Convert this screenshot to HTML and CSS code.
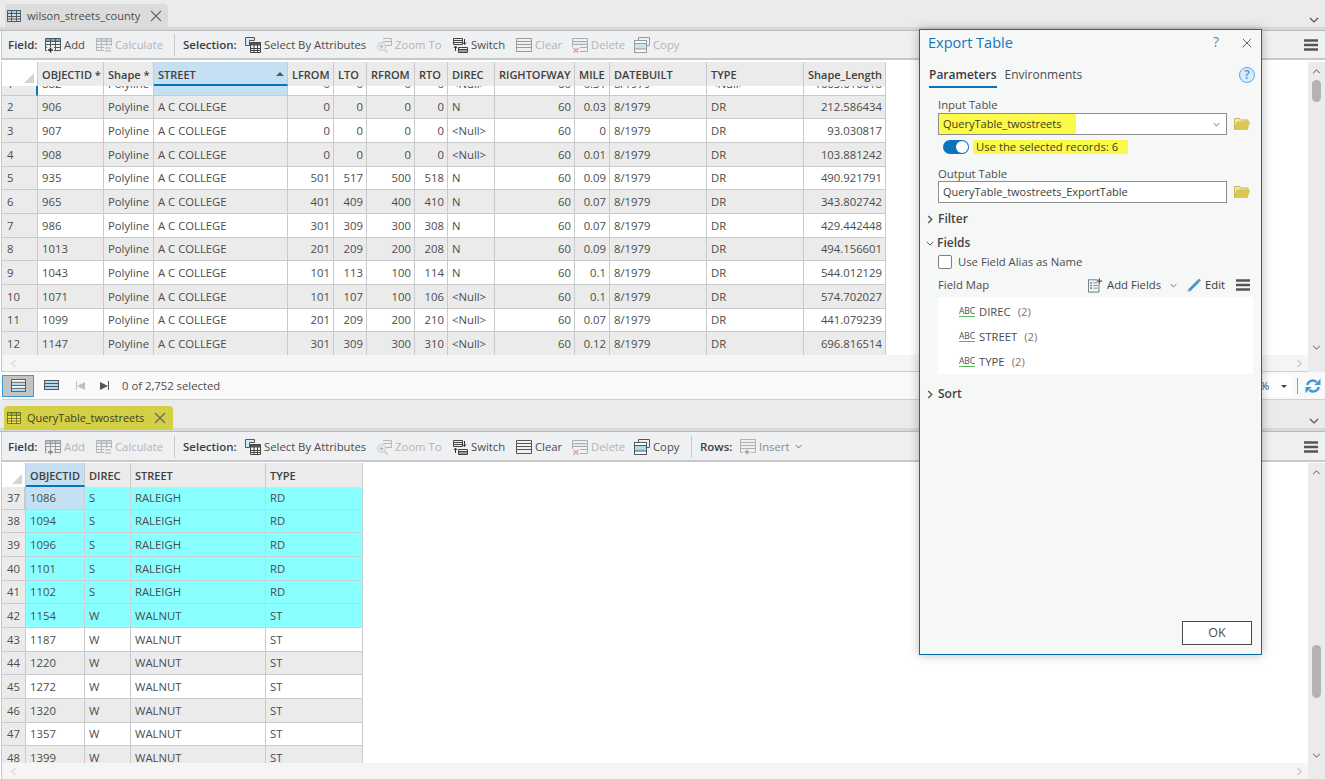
FILE: index.html
```html
<!DOCTYPE html>
<html lang="en">
<head>
<meta charset="utf-8">
<title>Export Table</title>
<link rel="stylesheet" href="styles.css">
</head>
<body>
<svg class="defs" width="0" height="0" aria-hidden="true">
  <symbol id="tbl" viewBox="0 0 16 16"><rect x="1" y="2" width="14" height="3" fill="#a9d3ee"/><path d="M1.500 2.500h13v11h-13zM1 5.500h14M1 8.500h14M1 11h14M5.500 2v12M10.500 2v12" fill="none" stroke="#4d5b66"/></symbol>
  <symbol id="add" viewBox="0 0 16 16"><rect x="1" y="1" width="14" height="3" fill="#6ea9d6"/><path d="M.5 1.500h15v12H.5zM0 4.500h16M0 7.500h16M0 10.500h16M5.500 1v13M10.500 1v13" fill="none" stroke="#555"/><rect x="2" y="10" width="7" height="6" fill="#f0f1f3"/><path d="M5.500 10.500v5M3 13h5" stroke="#333" stroke-width="1.600"/></symbol>
  <symbol id="calc" viewBox="0 0 16 16"><rect x="1" y="1" width="14" height="3" fill="#a9c9e2"/><path d="M.5 1.500h15v12H.5zM0 4.500h16M0 7.500h16M0 10.500h16M5.500 1v13M10.500 1v13" fill="none" stroke="#888"/><rect x="8" y="9" width="8" height="7" fill="#f0f1f3"/><path d="M9 11h6M9 14h6" stroke="#777" stroke-width="1.200"/></symbol>
  <symbol id="sel" viewBox="0 0 16 16"><path d="M.5.500h9v3h-5v5h-4z" fill="#d4e9f7" stroke="#555"/><rect x="5" y="5" width="11" height="11" fill="#f0f1f3"/><rect x="5.500" y="5.500" width="10" height="3" fill="#555"/><path d="M5.500 5.500h10v10h-10zM5 11.500h11M5 13.500h11M9 8v8M12.500 8v8" fill="none" stroke="#444"/></symbol>
  <symbol id="zoom" viewBox="0 0 16 16"><path d="M7 1.500h8.500v7h-6M7 4.500h8.500" fill="none" stroke="#888"/><circle cx="5.500" cy="9.500" r="4" fill="#dbeaf5" stroke="#9cb6c9"/><path d="M8.500 12.500l3 3" stroke="#c5a882" stroke-width="1.600"/><path d="M3.500 9.500h4M5.500 7.500v4" stroke="#888"/></symbol>
  <symbol id="swi" viewBox="0 0 16 16"><path d="M1.500 1.500h9v6h-9zM1 3.500h10M1 5.500h10M6.500 10.500h9v5h-9zM6 12.500h10M6 14h10" fill="none" stroke="#444"/><path d="M12.500 2v5M11 5.500l1.500 2 1.500-2M3.500 14v-4.500M2 11l1.500-2 1.500 2" fill="none" stroke="#333"/></symbol>
  <symbol id="clr" viewBox="0 0 16 16"><path d="M.5 1.500h15v13H.5zM0 4.500h16M0 7.500h16M0 10.500h16" fill="none" stroke="#555"/></symbol>
  <symbol id="del" viewBox="0 0 16 16"><rect x="0" y="4.500" width="16" height="3" fill="#cfe3f2"/><path d="M.5 1.500h15v13H.5zM0 4.500h16M0 7.500h16M6 10.500h10" fill="none" stroke="#777"/><rect x="0" y="10" width="8" height="6" fill="#f0f1f3"/><path d="M1.500 11l5 4.500M6.500 11l-5 4.500" stroke="#d9603d" stroke-width="1.500"/></symbol>
  <symbol id="cpy" viewBox="0 0 16 16"><path d="M4.500 3V.5h11v8H13" fill="none" stroke="#555"/><rect x=".5" y="3.500" width="12" height="12" fill="#fff" stroke="#555"/><rect x="1" y="7" width="11" height="5" fill="#a9dcf4"/><path d="M0 6.500h13M0 12h13" stroke="#555"/></symbol>
  <symbol id="ins" viewBox="0 0 16 16"><path d="M.5.500h15v13H.5zM0 3.500h16M0 6.500h16M0 9.500h16" fill="none" stroke="#888"/><rect x="3" y="10" width="8" height="6" fill="#f0f1f3"/><path d="M7 10.500v5M4.500 13h5" stroke="#777" stroke-width="1.600"/></symbol>
  <symbol id="ham" viewBox="0 0 14 12"><path d="M0 1.500h14M0 6h14M0 10.500h14" stroke="#555" stroke-width="2.600"/></symbol>
  <symbol id="folder" viewBox="0 0 16 14"><path d="M.5 3V1.500h5l1 1.500h7.500V5H3L.5 12z" fill="#f3e9b5" stroke="#c8b454"/><path d="M3 5h13l-2.500 8H0z" fill="#d9c654"/></symbol>
  <symbol id="dn" viewBox="0 0 10 6"><path d="M1 1l4 4 4-4" fill="none" stroke="#555" stroke-width="1.200"/></symbol>
  <symbol id="up" viewBox="0 0 10 6"><path d="M1 5l4-4 4 4" fill="none" stroke="#555" stroke-width="1.200"/></symbol>
  <symbol id="rt" viewBox="0 0 6 10"><path d="M1 1l4 4-4 4" fill="none" stroke="#555" stroke-width="1.500"/></symbol>
  <symbol id="lt" viewBox="0 0 6 10"><path d="M5 1L1 5l4 4" fill="none" stroke="#555" stroke-width="1.200"/></symbol>
  <symbol id="x" viewBox="0 0 12 12"><path d="M1 1l10 10M11 1L1 11" stroke="#666" stroke-width="1.200"/></symbol>
  <symbol id="view1" viewBox="0 0 16 14"><rect x=".5" y=".5" width="15" height="13" fill="#fff" stroke="#555"/><rect x="1" y="4" width="14" height="3" fill="#a9dcf4"/><rect x="1" y="10" width="14" height="3" fill="#a9dcf4"/><path d="M0 3.500h16M0 7h16M0 10h16" stroke="#555"/></symbol>
  <symbol id="view2" viewBox="0 0 15 10"><rect x=".5" y=".5" width="14" height="9" fill="#a9dcf4" stroke="#555"/><path d="M0 3.500h15M0 6.500h15" stroke="#555"/></symbol>
</svg>

<section class="pane pane-top">
  <div class="tabstrip tabstrip-top">
    <div class="tab tab-plain">
      <svg class="ic16"><use href="#tbl"/></svg>
      <span class="tab-label">wilson_streets_county</span>
      <svg class="tab-x"><use href="#x"/></svg>
    </div>
    <svg class="strip-chev"><use href="#dn"/></svg>
  </div>
  <div class="band"></div>
  <div class="toolbar">
    <span class="lbl w-field">Field:</span>
    <span class="tool w-add"><svg class="ic16"><use href="#add"/></svg>Add</span>
    <span class="tool off w-calc"><svg class="ic16"><use href="#calc"/></svg>Calculate</span>
    <i class="tsep"></i>
    <span class="lbl w-sel">Selection:</span>
    <span class="tool w-sba"><svg class="ic16"><use href="#sel"/></svg>Select By Attributes</span>
    <span class="tool off w-zoom"><svg class="ic16"><use href="#zoom"/></svg>Zoom To</span>
    <span class="tool w-swi"><svg class="ic16"><use href="#swi"/></svg>Switch</span>
    <span class="tool off w-clr"><svg class="ic16"><use href="#clr"/></svg>Clear</span>
    <span class="tool off w-del"><svg class="ic16"><use href="#del"/></svg>Delete</span>
    <span class="tool off w-cpy"><svg class="ic16"><use href="#cpy"/></svg>Copy</span>
    <svg class="ham"><use href="#ham"/></svg>
  </div>
  <div class="work work-top">
    <div class="work-left">
      <div class="grid grid-a">
        <div class="row head">
          <div class="c corner"></div><div class="c">OBJECTID *</div><div class="c">Shape *</div><div class="c sorted">STREET<i class="sort"></i></div><div class="c">LFROM</div><div class="c">LTO</div><div class="c">RFROM</div><div class="c">RTO</div><div class="c">DIREC</div><div class="c">RIGHTOFWAY</div><div class="c">MILE</div><div class="c">DATEBUILT</div><div class="c">TYPE</div><div class="c">Shape_Length</div>
        </div>
        <div class="body">
          <div class="rows rows-a">
            <div class="row"><div class="c n cur">1</div><div class="c">882</div><div class="c">Polyline</div><div class="c hl"></div><div class="c r">0</div><div class="c r">0</div><div class="c r">0</div><div class="c r">0</div><div class="c">&lt;Null&gt;</div><div class="c r">60</div><div class="c r">0.31</div><div class="c">8/1979</div><div class="c">&lt;Null&gt;</div><div class="c r">1663.616618</div></div>
            <div class="row alt"><div class="c n">2</div><div class="c">906</div><div class="c">Polyline</div><div class="c">A C COLLEGE</div><div class="c r">0</div><div class="c r">0</div><div class="c r">0</div><div class="c r">0</div><div class="c">N</div><div class="c r">60</div><div class="c r">0.03</div><div class="c">8/1979</div><div class="c">DR</div><div class="c r">212.586434</div></div>
            <div class="row"><div class="c n">3</div><div class="c">907</div><div class="c">Polyline</div><div class="c">A C COLLEGE</div><div class="c r">0</div><div class="c r">0</div><div class="c r">0</div><div class="c r">0</div><div class="c">&lt;Null&gt;</div><div class="c r">60</div><div class="c r">0</div><div class="c">8/1979</div><div class="c">DR</div><div class="c r">93.030817</div></div>
            <div class="row alt"><div class="c n">4</div><div class="c">908</div><div class="c">Polyline</div><div class="c">A C COLLEGE</div><div class="c r">0</div><div class="c r">0</div><div class="c r">0</div><div class="c r">0</div><div class="c">&lt;Null&gt;</div><div class="c r">60</div><div class="c r">0.01</div><div class="c">8/1979</div><div class="c">DR</div><div class="c r">103.881242</div></div>
            <div class="row"><div class="c n">5</div><div class="c">935</div><div class="c">Polyline</div><div class="c">A C COLLEGE</div><div class="c r">501</div><div class="c r">517</div><div class="c r">500</div><div class="c r">518</div><div class="c">N</div><div class="c r">60</div><div class="c r">0.09</div><div class="c">8/1979</div><div class="c">DR</div><div class="c r">490.921791</div></div>
            <div class="row alt"><div class="c n">6</div><div class="c">965</div><div class="c">Polyline</div><div class="c">A C COLLEGE</div><div class="c r">401</div><div class="c r">409</div><div class="c r">400</div><div class="c r">410</div><div class="c">N</div><div class="c r">60</div><div class="c r">0.07</div><div class="c">8/1979</div><div class="c">DR</div><div class="c r">343.802742</div></div>
            <div class="row"><div class="c n">7</div><div class="c">986</div><div class="c">Polyline</div><div class="c">A C COLLEGE</div><div class="c r">301</div><div class="c r">309</div><div class="c r">300</div><div class="c r">308</div><div class="c">N</div><div class="c r">60</div><div class="c r">0.07</div><div class="c">8/1979</div><div class="c">DR</div><div class="c r">429.442448</div></div>
            <div class="row alt"><div class="c n">8</div><div class="c">1013</div><div class="c">Polyline</div><div class="c">A C COLLEGE</div><div class="c r">201</div><div class="c r">209</div><div class="c r">200</div><div class="c r">208</div><div class="c">N</div><div class="c r">60</div><div class="c r">0.09</div><div class="c">8/1979</div><div class="c">DR</div><div class="c r">494.156601</div></div>
            <div class="row"><div class="c n">9</div><div class="c">1043</div><div class="c">Polyline</div><div class="c">A C COLLEGE</div><div class="c r">101</div><div class="c r">113</div><div class="c r">100</div><div class="c r">114</div><div class="c">N</div><div class="c r">60</div><div class="c r">0.1</div><div class="c">8/1979</div><div class="c">DR</div><div class="c r">544.012129</div></div>
            <div class="row alt"><div class="c n">10</div><div class="c">1071</div><div class="c">Polyline</div><div class="c">A C COLLEGE</div><div class="c r">101</div><div class="c r">107</div><div class="c r">100</div><div class="c r">106</div><div class="c">&lt;Null&gt;</div><div class="c r">60</div><div class="c r">0.1</div><div class="c">8/1979</div><div class="c">DR</div><div class="c r">574.702027</div></div>
            <div class="row"><div class="c n">11</div><div class="c">1099</div><div class="c">Polyline</div><div class="c">A C COLLEGE</div><div class="c r">201</div><div class="c r">209</div><div class="c r">200</div><div class="c r">210</div><div class="c">&lt;Null&gt;</div><div class="c r">60</div><div class="c r">0.07</div><div class="c">8/1979</div><div class="c">DR</div><div class="c r">441.079239</div></div>
            <div class="row alt"><div class="c n">12</div><div class="c">1147</div><div class="c">Polyline</div><div class="c">A C COLLEGE</div><div class="c r">301</div><div class="c r">309</div><div class="c r">300</div><div class="c r">310</div><div class="c">&lt;Null&gt;</div><div class="c r">60</div><div class="c r">0.12</div><div class="c">8/1979</div><div class="c">DR</div><div class="c r">696.816514</div></div>
          </div>
        </div>
      </div>
      <div class="hscroll hscroll-top"><svg class="ar-h faint"><use href="#lt"/></svg><svg class="ar-h faint"><use href="#rt"/></svg></div>
    </div>
    <div class="vscroll vscroll-top"><svg class="ar-v"><use href="#up"/></svg><i class="thumb thumb-top"></i><svg class="ar-v ar-end"><use href="#dn"/></svg></div>
  </div>
  <div class="status">
    <span class="view view-on"><svg class="ic-view"><use href="#view1"/></svg></span>
    <svg class="ic-view2"><use href="#view2"/></svg>
    <span class="nav nav-off"><i class="nav-bar"></i><i class="tri-l"></i></span>
    <span class="nav"><i class="tri-r"></i><i class="nav-bar"></i></span>
    <span class="count">0 of 2,752 selected</span>
    <span class="pct">%<i class="pct-caret"></i></span>
    <i class="stat-sep"></i>
    <svg class="refresh" viewBox="0 0 16 16"><path d="M2.200 7A5.600 5.600 0 0 1 11.500 4M13.800 9A5.600 5.600 0 0 1 4.500 12" fill="none" stroke="#3d9ad9" stroke-width="2.400"/><path d="M15.500 .8v6.200H9.300zM.5 15.200V9h6.200z" fill="#3d9ad9"/></svg>
  </div>
</section>

<section class="pane pane-bottom">
  <div class="tabstrip tabstrip-bottom">
    <div class="tab tab-yellow">
      <svg class="ic16" viewBox="0 0 16 16"><rect x="1" y="2" width="14" height="12" fill="#f0e84e"/><rect x="1" y="2" width="14" height="3" fill="#a8b43e"/><path d="M1.500 2.500h13v11h-13zM1 5.500h14M1 8.500h14M1 11h14M5.500 2v12M10.500 2v12" fill="none" stroke="#5d6322" stroke-width=".8"/></svg>
      <span class="tab-label">QueryTable_twostreets</span>
      <svg class="tab-x"><use href="#x"/></svg>
    </div>
    <svg class="strip-chev"><use href="#dn"/></svg>
  </div>
  <div class="band"></div>
  <div class="toolbar toolbar-tall">
    <span class="lbl w-field">Field:</span>
    <span class="tool off w-add"><svg class="ic16"><use href="#add"/></svg>Add</span>
    <span class="tool off w-calc"><svg class="ic16"><use href="#calc"/></svg>Calculate</span>
    <i class="tsep"></i>
    <span class="lbl w-sel">Selection:</span>
    <span class="tool w-sba"><svg class="ic16"><use href="#sel"/></svg>Select By Attributes</span>
    <span class="tool off w-zoom"><svg class="ic16"><use href="#zoom"/></svg>Zoom To</span>
    <span class="tool w-swi"><svg class="ic16"><use href="#swi"/></svg>Switch</span>
    <span class="tool w-clr"><svg class="ic16"><use href="#clr"/></svg>Clear</span>
    <span class="tool off w-del"><svg class="ic16"><use href="#del"/></svg>Delete</span>
    <span class="tool w-cpy"><svg class="ic16"><use href="#cpy"/></svg>Copy</span>
    <i class="tsep"></i>
    <span class="lbl w-rows">Rows:</span>
    <span class="tool off-soft"><svg class="ic16"><use href="#ins"/></svg>Insert<svg class="mini"><use href="#dn"/></svg></span>
    <svg class="ham"><use href="#ham"/></svg>
  </div>
  <div class="work work-bottom">
    <div class="work-left">
      <div class="grid grid-b">
        <div class="row head">
          <div class="c corner"></div><div class="c sorted-id">OBJECTID</div><div class="c">DIREC</div><div class="c">STREET</div><div class="c">TYPE</div>
        </div>
        <div class="body">
          <div class="rows rows-b">
            <div class="row sel"><div class="c n cur">37</div><div class="c hl">1086</div><div class="c">S</div><div class="c">RALEIGH</div><div class="c">RD</div></div>
            <div class="row sel"><div class="c n">38</div><div class="c">1094</div><div class="c">S</div><div class="c">RALEIGH</div><div class="c">RD</div></div>
            <div class="row sel"><div class="c n">39</div><div class="c">1096</div><div class="c">S</div><div class="c">RALEIGH</div><div class="c">RD</div></div>
            <div class="row sel"><div class="c n">40</div><div class="c">1101</div><div class="c">S</div><div class="c">RALEIGH</div><div class="c">RD</div></div>
            <div class="row sel"><div class="c n">41</div><div class="c">1102</div><div class="c">S</div><div class="c">RALEIGH</div><div class="c">RD</div></div>
            <div class="row sel"><div class="c n">42</div><div class="c">1154</div><div class="c">W</div><div class="c">WALNUT</div><div class="c">ST</div></div>
            <div class="row"><div class="c n">43</div><div class="c">1187</div><div class="c">W</div><div class="c">WALNUT</div><div class="c">ST</div></div>
            <div class="row alt"><div class="c n">44</div><div class="c">1220</div><div class="c">W</div><div class="c">WALNUT</div><div class="c">ST</div></div>
            <div class="row"><div class="c n">45</div><div class="c">1272</div><div class="c">W</div><div class="c">WALNUT</div><div class="c">ST</div></div>
            <div class="row alt"><div class="c n">46</div><div class="c">1320</div><div class="c">W</div><div class="c">WALNUT</div><div class="c">ST</div></div>
            <div class="row"><div class="c n">47</div><div class="c">1357</div><div class="c">W</div><div class="c">WALNUT</div><div class="c">ST</div></div>
            <div class="row alt"><div class="c n">48</div><div class="c">1399</div><div class="c">W</div><div class="c">WALNUT</div><div class="c">ST</div></div>
          </div>
        </div>
      </div>
      <div class="hscroll hscroll-bottom"><svg class="ar-h faint"><use href="#lt"/></svg><svg class="ar-h faint"><use href="#rt"/></svg></div>
    </div>
    <div class="vscroll vscroll-bottom"><svg class="ar-v"><use href="#up"/></svg><i class="thumb thumb-bottom"></i><svg class="ar-v ar-end"><use href="#dn"/></svg></div>
  </div>
</section>

<aside class="dialog">
  <header class="dlg-title">
    <span class="dlg-name">Export Table</span>
    <span class="dlg-q">?</span>
    <svg class="dlg-x"><use href="#x"/></svg>
  </header>
  <div class="dlg-tabs">
    <span class="dlg-tab dlg-tab-on">Parameters</span>
    <span class="dlg-tab">Environments</span>
    <span class="help">?</span>
  </div>
  <div class="form">
    <div class="f-label f-first">Input Table</div>
    <div class="f-row">
      <div class="f-box f-select"><span class="mark mark-input">QueryTable_twostreets</span><svg class="mini sel-caret"><use href="#dn"/></svg></div>
      <svg class="folder"><use href="#folder"/></svg>
    </div>
    <div class="toggle-row">
      <span class="toggle"><i class="knob"></i></span>
      <span class="mark mark-toggle">Use the selected records: 6</span>
    </div>
    <div class="f-label f-second">Output Table</div>
    <div class="f-row">
      <div class="f-box">QueryTable_twostreets_ExportTable</div>
      <svg class="folder"><use href="#folder"/></svg>
    </div>
  </div>
  <div class="sect sect-filter"><svg class="sect-rt"><use href="#rt"/></svg>Filter</div>
  <div class="sect sect-fields"><svg class="sect-dn"><use href="#dn"/></svg>Fields</div>
  <div class="check-row"><i class="check"></i>Use Field Alias as Name</div>
  <div class="map-bar">
    <span class="map-name">Field Map</span>
    <svg class="ic-addf" viewBox="0 0 16 16"><path d="M.5 1.500h10.500M.5 1.500v14h12V6" fill="none" stroke="#666"/><path d="M2.500 5h2M2.500 8h2M2.500 11h2" stroke="#3d9ad9" stroke-width="2"/><path d="M6 5h5M6 8h5M6 11h5" stroke="#777"/><path d="M13 0v6M10 3h6" stroke="#555" stroke-width="1.500"/></svg>
    <span class="map-add">Add Fields</span>
    <svg class="mini map-caret"><use href="#dn"/></svg>
    <svg class="ic-pen" viewBox="0 0 14 14"><path d="M1 11.500L10.500 2l2 2L3 13.500z" fill="#3d9ad9"/><path d="M1 11.500L3 13.500 0 14z" fill="#e3b98c"/><path d="M10.500 2l1.500-1.500 2 2L12.500 4z" fill="#888"/></svg>
    <span class="map-edit">Edit</span>
    <svg class="ham ham-map"><use href="#ham"/></svg>
  </div>
  <ul class="fields">
    <li class="field"><span class="abc">ABC</span>DIREC<span class="fcount">(2)</span></li>
    <li class="field"><span class="abc">ABC</span>STREET<span class="fcount">(2)</span></li>
    <li class="field"><span class="abc">ABC</span>TYPE<span class="fcount">(2)</span></li>
  </ul>
  <div class="sect sect-sort"><svg class="sect-rt"><use href="#rt"/></svg>Sort</div>
  <div class="dlg-foot"><span class="ok">OK</span></div>
</aside>
</body>
</html>
```
FILE: styles.css
```css
* { box-sizing: border-box; }
html, body { margin: 0; padding: 0; }
body {
  width: 1325px; height: 779px; overflow: hidden; position: relative;
  background: #fff; color: #4c4c4c;
  font-family: "Open Sans", "Noto Sans", "Liberation Sans", sans-serif;
  font-size: 11.3px; line-height: 16px;
}
.defs { position: absolute; }
i { display: block; font-style: normal; }
svg { display: block; flex: none; }
.pane { display: flex; flex-direction: column; }
.pane-top { height: 400px; }
.pane-bottom { height: 379px; }

/* tabs */
.tabstrip { background: #ebebeb; display: flex; align-items: flex-end; position: relative; }
.tabstrip-top { height: 27px; padding-left: 5px; }
.tabstrip-bottom { height: 28px; padding-left: 4px; }
.tab { display: flex; align-items: center; height: 23px; border-radius: 4px 4px 0 0; padding-left: 1px; }
.tab-plain { width: 163px; background: #dcdcdc; }
.tab-yellow { width: 169px; height: 24px; margin-bottom: -2px; background: #d3cf46; position: relative; padding-left: 2px; color: #3e3e20; }
.tab-label { margin-left: 5px; white-space: nowrap; font-size: 11.1px; flex: 1; }
.tab-yellow .tab-label { font-size: 10.9px; }
.tab-x { width: 12px; height: 12px; margin-right: 6px; }
.tab-yellow .tab-x { margin-right: 7px; }
.ic16 { width: 16px; height: 16px; }
.strip-chev { width: 10px; height: 6px; margin-left: auto; margin-right: 6px; margin-bottom: 4px; }
.band { height: 4px; background: #d8d8d8; border-bottom: 1px solid #bdbdbd; }

/* toolbar */
.toolbar {
  height: 29px; margin-left: 1px; padding: 1px 0 0 6px; background: #eff0f2;
  display: flex; align-items: center; border-bottom: 2px solid #c8c8c8; border-left: 1px solid #c8c8c8;
  white-space: nowrap;
}
.toolbar-tall { height: 30px; }
.lbl { font-weight: 600; color: #3d3d3d; font-size: 11.5px; }
.w-field { width: 37px; }
.w-sel { width: 62px; }
.w-rows { width: 40px; }
.tool { display: flex; align-items: center; gap: 3px; }
.w-add { width: 51px; }
.w-calc { width: 78px; }
.w-sba { width: 131px; }
.w-zoom { width: 76px; }
.w-swi { width: 64px; }
.w-clr { width: 56px; }
.w-del { width: 62px; }
.w-cpy { width: 57px; }
.off { color: #b4b4b4; }
.off svg { opacity: .55; }
.off-soft { color: #8a8a8a; }
.off-soft .ic16 { opacity: .6; }
.tsep { width: 1px; height: 22px; background: #c8c8c8; margin: 0 8px 0 0; }
.mini { width: 7px; height: 5px; margin-left: 3px; }
.ham { width: 14px; height: 12px; margin-left: auto; margin-right: 7px; }

/* work area */
.work { display: flex; padding-top: 2px; }
.work-top { height: 312px; }
.work-bottom { height: 317px; padding-top: 1px; }
.work-left { flex: 1; min-width: 0; display: flex; flex-direction: column; margin-left: 1px; border-left: 1px solid #c8c8c8; }
.vscroll { width: 17px; background: #ebebeb; position: relative; }
.grid { flex: 1; min-height: 0; display: flex; flex-direction: column; overflow: hidden; }
.grid-a { --cols: 36px 66px 50px 134px 46px 33px 48px 33px 47px 80px 35px 97px 97px 82px; }
.grid-b { --cols: 24px 59px 46px 135px 97px; }
.row { display: grid; grid-template-columns: var(--cols); justify-content: start; height: 23.67px; }
.head { height: 24px; flex: none; }
.body { flex: 1; min-height: 0; overflow: hidden; }
.rows-a { margin-top: -14px; }
.rows-b { margin-top: -1px; }
.c {
  padding: 1px 3px 0 4px; display: flex; align-items: center; min-width: 0;
  white-space: nowrap; overflow: hidden;
  border-right: 1px solid #cacaca; border-bottom: 1px solid #cacaca;
  position: relative;
}
.r { justify-content: flex-end; }
.alt .c { background: #ebebeb; }
.n { background: #ebebeb; padding-left: 5px; }
.sel .c { background: #8affff; border-color: #c9d3d3; }
.sel .n { background: #ebebeb; border-color: #cacaca; }
.sel .c.hl, .c.hl { background: #c5e0f3; }
.cur { border-right: 2px solid #0a74ba; }
.head .c { background: #ebebeb; font-weight: 600; font-size: 11px; color: #404040; border-bottom: none; padding-top: 2px; }
.head .corner { background: #fff; }
.corner::after {
  content: ""; position: absolute; right: 3px; bottom: 3px;
  border-style: solid; border-width: 0 0 10px 10px; border-color: transparent transparent #d4d4d4 transparent;
}
.head .sorted { background: #c5e0f3; border-bottom: 2px solid #0a74ba; justify-content: flex-start; padding-top: 4px; }
.head .sorted-id { background: #c5e0f3; border-bottom: 2px solid #0a74ba; padding-top: 4px; }
.sort {
  position: absolute; right: 3px; top: 10px;
  border-style: solid; border-width: 0 4px 4px 4px; border-color: transparent transparent #555 transparent;
}
.hscroll { background: #f5f5f5; display: flex; justify-content: space-between; align-items: center; flex: none; padding: 0 6px 0 9px; }
.hscroll-top { height: 17px; border-bottom: 1px solid #cfcfcf; }
.hscroll-bottom { height: 16px; }
.ar-h { width: 5px; height: 9px; }
.faint { opacity: .3; }
.ar-v { width: 9px; height: 5px; position: absolute; left: 4px; top: 7px; }
.ar-end { top: auto; bottom: 22px; }
.vscroll-bottom .ar-end { bottom: 21px; }
.thumb { position: absolute; left: 4px; width: 9px; border-radius: 5px; background: #b3b3b3; }
.thumb-top { top: 18px; height: 22px; }
.thumb-bottom { top: 182px; height: 53px; }

/* status */
.status {
  height: 28px; flex: none; margin-left: 2px; background: #f9f9f9;
  display: flex; align-items: center; border-bottom: 1px solid #cfcfcf; position: relative;
}
.view { width: 32px; height: 22px; display: flex; align-items: center; justify-content: center; }
.view-on { background: #c4c4c4; border: 1px solid #3d9ad9; }
.ic-view { width: 15px; height: 13px; }
.ic-view2 { width: 15px; height: 10px; margin-left: 10px; margin-bottom: 2px; }
.nav { display: flex; align-items: center; width: 24px; }
.nav-off { opacity: .35; margin-left: 17px; }
.nav-bar { width: 1px; height: 9px; background: #555; }
.tri-l { border-style: solid; border-width: 4.500px 8px 4.500px 0; border-color: transparent #555 transparent transparent; }
.tri-r { border-style: solid; border-width: 4.500px 0 4.500px 8px; border-color: transparent transparent transparent #555; }
.count { margin-left: -2px; white-space: nowrap; }
.pct {
  margin-left: auto; width: 40px; height: 22px; background: #fff; padding-left: 8px;
  display: flex; align-items: center; position: relative;
}
.pct-caret {
  position: absolute; left: 29px; top: 10px;
  border-style: solid; border-width: 3px 3px 0 3px; border-color: #444 transparent transparent transparent;
}
.stat-sep { width: 1px; height: 16px; background: #9a9a9a; margin: 0 7px 0 5px; }
.refresh { width: 16px; height: 16px; margin-right: 4px; }

/* dialog */
.dialog {
  position: absolute; left: 919px; top: 29px; width: 343px; height: 626px;
  background: #f6f8f8; border: 1px solid #0b6cab;
  box-shadow: 0 0 10px rgba(0, 0, 0, .28);
  display: flex; flex-direction: column;
}
.dlg-title { height: 26px; display: flex; align-items: center; padding: 0 9px 0 8px; flex: none; }
.dlg-name { font-size: 14.500px; color: #1177bb; flex: 1; }
.dlg-q { font-size: 14px; color: #808080; margin-right: 23px; margin-bottom: 3px; }
.dlg-x { width: 10px; height: 10px; }
.dlg-tabs { height: 28px; display: flex; align-items: center; padding: 0 0 0 9px; gap: 8px; position: relative; flex: none; margin-top: 4px; }
.dlg-tab { font-size: 12px; line-height: 27px; height: 27px; }
.dlg-tab-on { font-weight: 600; color: #3d3d3d; box-shadow: inset 0 -2px 0 #0a74ba; }
.help {
  width: 16px; height: 16px; margin-left: auto; margin-right: 6px; margin-top: 1px; border-radius: 50%;
  border: 1.500px solid #5aa9e0; color: #3d9ad9; background: #d8ebf8;
  display: flex; align-items: center; justify-content: center; font-size: 12px; font-weight: 600;
}
.form { padding-left: 18px; flex: none; }
.f-label { line-height: 16px; }
.f-first { margin-top: 9px; }
.f-second { margin-top: 12px; margin-bottom: -1px; }
.f-row { display: flex; align-items: center; height: 22px; margin-top: 0; }
.f-box { width: 289px; height: 22px; border: 1px solid #8e8e8e; background: #fff; padding-left: 4px; display: flex; align-items: center; position: relative; color: #3d3d3d; font-size: 11px; }
.f-select { padding-left: 0; border-left-width: 1px; }
.folder { width: 16px; height: 14px; margin-left: 7px; }
.mark { background: #fbf94a; color: #40401a; }
.mark-input { width: 137px; height: 20px; padding-left: 4px; line-height: 20px; }
.sel-caret { position: absolute; right: 6px; top: 8px; margin: 0; }
.toggle-row { display: flex; align-items: center; height: 14px; margin-top: 5px; padding-left: 5px; }
.toggle { width: 26px; height: 14px; border-radius: 7px; background: #0a74ba; position: relative; display: block; }
.knob { position: absolute; right: 1px; top: 1px; width: 12px; height: 12px; border-radius: 50%; background: #fff; }
.mark-toggle { margin-left: 4px; width: 155px; height: 14px; padding-left: 3px; line-height: 14px; white-space: nowrap; }
.sect { display: flex; align-items: center; font-weight: 600; font-size: 12px; color: #444; padding-left: 7px; flex: none; height: 16px; }
.sect-rt { width: 6px; height: 9px; margin-right: 5px; }
.sect-dn { width: 8px; height: 5px; margin-right: 3px; margin-left: -1px; }
.sect-filter { margin-top: 8px; }
.sect-fields { margin-top: 8px; }
.sect-sort { margin-top: 12px; }
.check-row { display: flex; align-items: center; height: 14px; margin-top: 4px; padding-left: 18px; flex: none; }
.check { width: 14px; height: 14px; border: 1px solid #7f7f7f; border-radius: 2px; background: #fff; margin-right: 6px; }
.map-bar { display: flex; align-items: center; height: 16px; margin-top: 8px; padding-left: 18px; flex: none; }
.map-name { width: 150px; }
.ic-addf { width: 14px; height: 15px; margin-right: 5px; }
.map-add { width: 60px; white-space: nowrap; color: #444; }
.map-caret { margin: 0 10px 0 3px; width: 7px; }
.ic-pen { width: 14px; height: 14px; margin-right: 4px; }
.map-edit { color: #333; }
.ham-map { margin-left: auto; margin-right: 11px; }
.fields { list-style: none; margin: 4px 8px 0 18px; padding: 2px 0 0 21px; background: #fff; height: 77px; flex: none; }
.field { height: 25px; display: flex; align-items: center; }
.abc { width: 16px; font-size: 8.500px; line-height: 9px; text-align: center; border-bottom: 1px solid #5cb85c; margin-right: 4px; padding-bottom: 1px; }
.fcount { margin-left: 7px; color: #777; }
.dlg-foot { margin-top: auto; padding: 0 9px 9px 0; display: flex; justify-content: flex-end; flex: none; }
.ok { width: 70px; height: 24px; border: 1px solid #4a4a4a; background: #fff; display: flex; align-items: center; justify-content: center; font-size: 12.500px; }
```
